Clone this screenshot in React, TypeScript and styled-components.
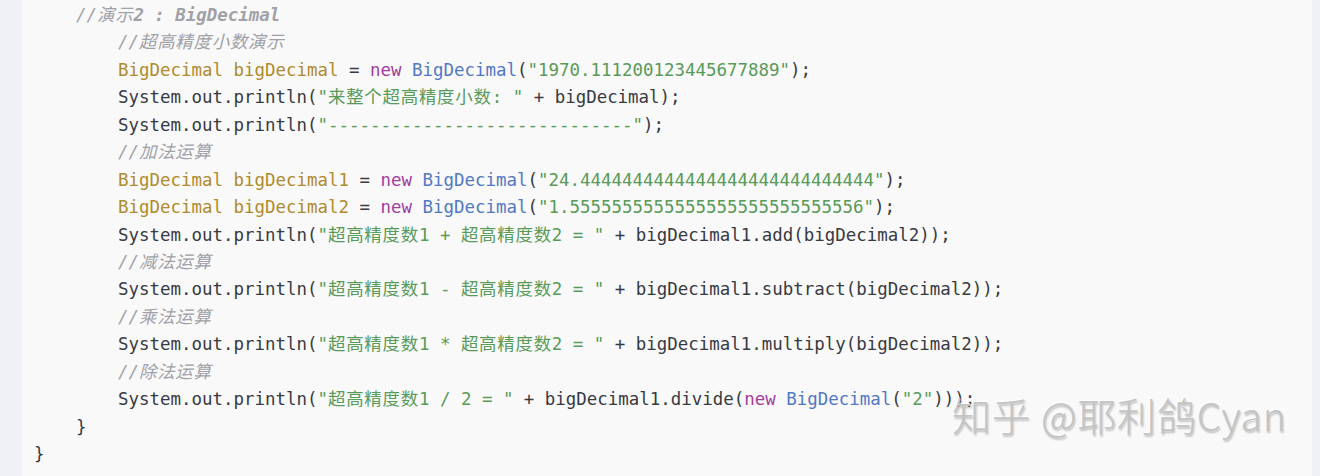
import React from "react";
import styled, { createGlobalStyle } from "styled-components";

const Global = createGlobalStyle`
  html, body { margin: 0; padding: 0; background: #f0f1f4; }
  body { width: 1320px; height: 476px; overflow: hidden; }
`;

const Page = styled.div`
  display: flex;
  width: 1320px;
  height: 476px;
  background: #f0f1f4;
`;

const Gutter = styled.div<{ $w: number }>`
  flex: 0 0 ${(p) => p.$w}px;
`;

const CodeBlock = styled.div`
  position: relative;
  flex: 1;
  background: #f9f9fa;
  padding: 2px 0 0 12px;
  overflow: hidden;
`;

const Pre = styled.pre`
  margin: 0;
  font-family: "DejaVu Sans Mono", "Noto Sans CJK SC", monospace;
  font-size: 17.45px;
  line-height: 27.44px;
  color: #383a42;
  white-space: pre;
`;

const Line = styled.div`
  height: 27.44px;
`;

type Kind = "plain" | "comment" | "bold" | "type" | "kw" | "ctor" | "str";

const Tok = styled.span<{ $k: Kind }>`
  color: ${(p) =>
    ({
      plain: "#383a42",
      comment: "#a0a1a7",
      bold: "#a0a1a7",
      type: "#b08a2c",
      kw: "#a33ba1",
      ctor: "#5278c4",
      str: "#589a57",
    })[p.$k]};
  font-style: ${(p) => (p.$k === "comment" || p.$k === "bold" ? "italic" : "normal")};
  font-weight: ${(p) => (p.$k === "bold" ? 700 : 400)};
`;

const Wide = styled.span`
  letter-spacing: 0.75px;
`;

const Watermark = styled.div`
  position: absolute;
  left: 930px;
  top: 395px;
  font-family: "Noto Sans CJK SC", "Noto Sans", sans-serif;
  font-size: 39px;
  font-weight: 300;
  line-height: 1;
  color: #c4c4c4;
  text-shadow: 1px 2px 2px rgba(0, 0, 0, 0.25), -1px -1px 0 rgba(255, 255, 255, 0.8);
  white-space: pre;
  letter-spacing: 0.8px;
`;

type T = [Kind, string];

const P = (s: string): T => ["plain", s];
const C = (s: string): T => ["comment", s];
const S = (s: string): T => ["str", s];
const Y = (s: string): T => ["type", s];
const K = (s: string): T => ["kw", s];
const B = (s: string): T => ["ctor", s];

const println = (str: string, rest: T[]): T[] => [
  P("        System.out.println("),
  S(`"${str}"`),
  ...rest,
];

const lines: T[][] = [
  [C("    //演示"), ["bold", "2 : BigDecimal"]],
  [C("        //超高精度小数演示")],
  [
    P("        "),
    Y("BigDecimal bigDecimal"),
    P(" = "),
    K("new"),
    P(" "),
    B("BigDecimal"),
    P("("),
    S('"1970.111200123445677889"'),
    P(");"),
  ],
  println("来整个超高精度小数: ", [P(" + bigDecimal);")]),
  println("-----------------------------", [P(");")]),
  [C("        //加法运算")],
  [
    P("        "),
    Y("BigDecimal bigDecimal1"),
    P(" = "),
    K("new"),
    P(" "),
    B("BigDecimal"),
    P("("),
    S('"24.4444444444444444444444444444"'),
    P(");"),
  ],
  [
    P("        "),
    Y("BigDecimal bigDecimal2"),
    P(" = "),
    K("new"),
    P(" "),
    B("BigDecimal"),
    P("("),
    S('"1.5555555555555555555555555556"'),
    P(");"),
  ],
  println("超高精度数1 + 超高精度数2 = ", [P(" + bigDecimal1.add(bigDecimal2));")]),
  [C("        //减法运算")],
  println("超高精度数1 - 超高精度数2 = ", [P(" + bigDecimal1.subtract(bigDecimal2));")]),
  [C("        //乘法运算")],
  println("超高精度数1 * 超高精度数2 = ", [P(" + bigDecimal1.multiply(bigDecimal2));")]),
  [C("        //除法运算")],
  println("超高精度数1 / 2 = ", [
    P(" + bigDecimal1.divide("),
    K("new"),
    P(" "),
    B("BigDecimal"),
    P("("),
    S('"2"'),
    P(")));"),
  ]),
  [P("    }")],
  [P("}")],
];

const CJK = /([\u3000-\u9fff\uff00-\uffef]+)/;

const renderText = (s: string) =>
  s.split(CJK).map((part, i) =>
    CJK.test(part) ? <Wide key={i}>{part}</Wide> : <React.Fragment key={i}>{part}</React.Fragment>
  );

export default function App() {
  return (
    <>
      <Global />
      <Page>
        <Gutter $w={22} />
        <CodeBlock>
          <Pre>
            {lines.map((toks, i) => (
              <Line key={i}>
                {toks.map(([k, s], j) => (
                  <Tok key={j} $k={k}>
                    {renderText(s)}
                  </Tok>
                ))}
              </Line>
            ))}
          </Pre>
          <Watermark>知乎 @耶利鸽Cyan</Watermark>
        </CodeBlock>
        <Gutter $w={8} />
      </Page>
    </>
  );
}
